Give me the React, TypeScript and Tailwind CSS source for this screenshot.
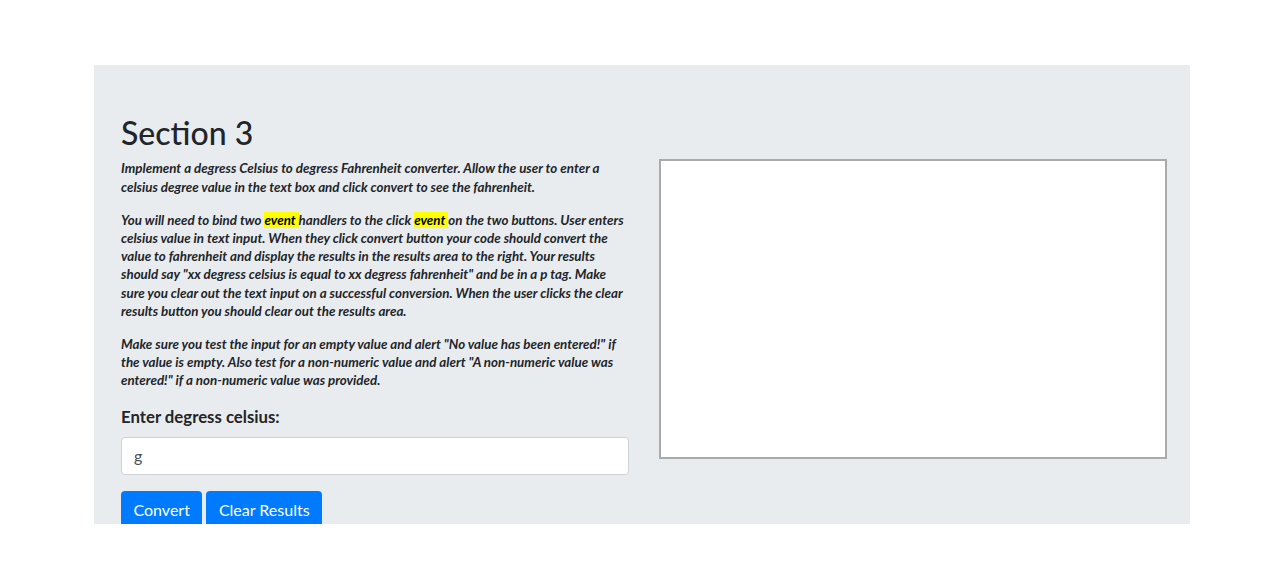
export default function App() {
  return (
    <div className="min-h-screen bg-white pt-[65px] text-[#212529] [font-family:Lato,'Open_Sans',sans-serif]">
      <div className="mx-[94px] h-[459px] overflow-hidden bg-[#e9ecef] pl-[27px] pr-[23px] pt-[49px]">
        <h1 className="mb-[7px] text-[32px] font-medium leading-[1.2]">Section 3</h1>
        <div className="grid grid-cols-2 gap-[30px]">
          <div>
            <div className="text-[13.35px] font-bold italic leading-[18.2px]">
              <p className="mb-[15px]">
                Implement a degress Celsius to degress Fahrenheit converter. Allow the user to enter a celsius degree
                value in the text box and click convert to see the fahrenheit.
              </p>
              <p className="mb-[15px]">
                You will need to bind two <mark className="bg-[#ffff00]">event </mark>handlers to the click{" "}
                <mark className="bg-[#ffff00]">event </mark>on the two buttons. User enters celsius value in text input.
                When they click convert button your code should convert the value to fahrenheit and display the results
                in the results area to the right. Your results should say "xx degress celsius is equal to xx degress
                fahrenheit" and be in a p tag. Make sure you clear out the text input on a successful conversion. When
                the user clicks the clear results button you should clear out the results area.
              </p>
              <p className="mb-[15px]">
                Make sure you test the input for an empty value and alert "No value has been entered!" if the value is
                empty. Also test for a non-numeric value and alert "A non-numeric value was entered!" if a non-numeric
                value was provided.
              </p>
            </div>
            <label className="mb-2 block text-[16.75px] font-bold leading-6">Enter degress celsius:</label>
            <input
              defaultValue="g"
              className="block h-[38px] w-full rounded border border-[#ced4da] bg-white px-3 text-base text-[#495057] outline-none"
            />
            <div className="mt-4 flex gap-1">
              <button className="h-[38px] rounded bg-[#007bff] px-[12.5px] text-base text-white">Convert</button>
              <button className="h-[38px] rounded bg-[#007bff] px-[12.5px] text-base text-white">Clear Results</button>
            </div>
          </div>
          <div>
            <div className="h-[300px] border-2 border-[#aaaaaa] bg-white"></div>
          </div>
        </div>
      </div>
    </div>
  );
}
